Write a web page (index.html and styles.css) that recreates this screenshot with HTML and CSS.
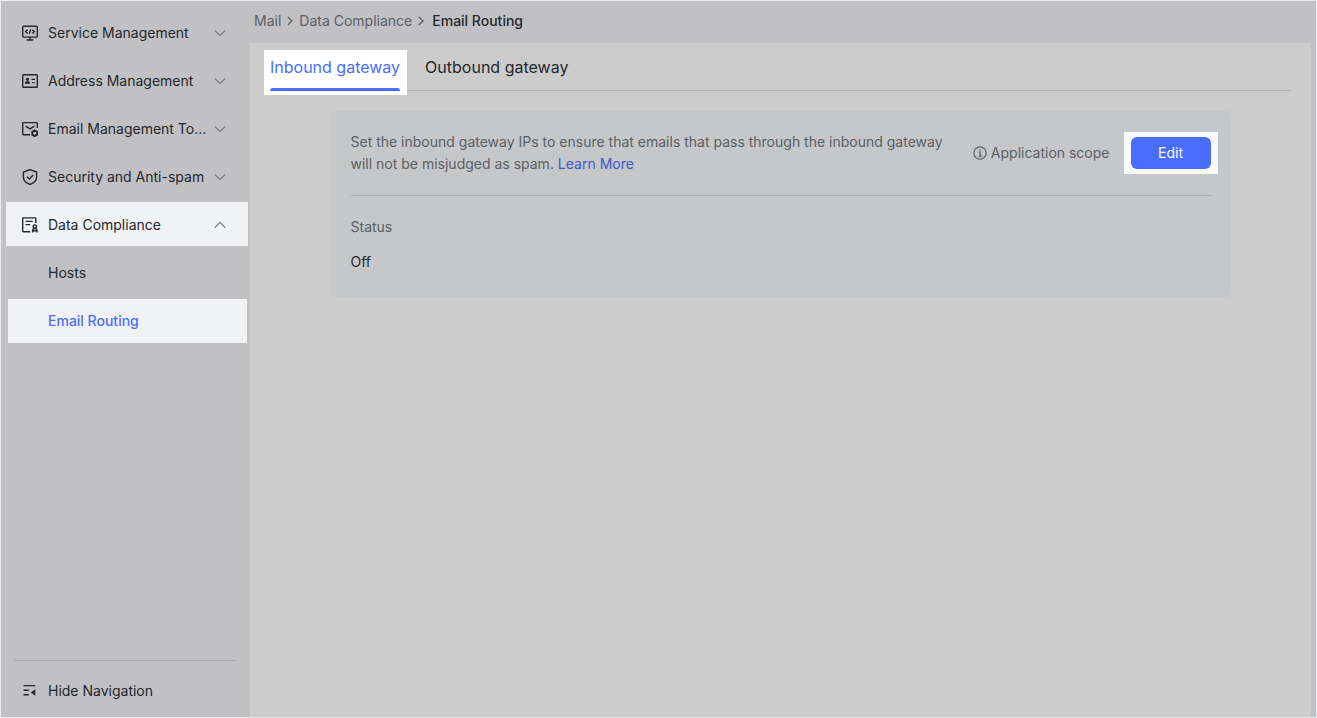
FILE: index.html
```html
<!DOCTYPE html>
<html lang="en">
<head>
<meta charset="utf-8">
<title>Email Routing</title>
<link rel="stylesheet" href="styles.css">
</head>
<body>
<div class="app">
  <aside class="sidebar">
    <nav class="nav" aria-label="Main">
      <button class="nav-item" type="button">
        <svg class="icon" viewBox="0 0 16 16"><rect x=".7" y="1.2" width="14.6" height="10.9" rx=".8"/><path d="M8 12v2.8M4.6 15h6.8M5.6 4.8 3.7 6.6l1.9 1.8M10.4 4.8l1.9 1.8-1.9 1.8M8.7 4.4 7.3 8.8"/></svg>
        <span class="label">Service Management</span>
        <svg class="chevron" viewBox="0 0 12 12"><path d="m.8 3.4 5.2 5.2 5.2-5.2"/></svg>
      </button>
      <button class="nav-item" type="button">
        <svg class="icon" viewBox="0 0 16 16"><rect x=".7" y="1.7" width="14.6" height="12.6" rx=".8"/><circle class="solid" cx="5.5" cy="6.3" r="1.6"/><path class="solid" d="M2.8 10.7c0-1.700 1.100-2.700 2.700-2.700s2.700 1 2.700 2.700z"/><path d="M9.500 6.400h3.500M10.200 9.600h2.300"/></svg>
        <span class="label">Address Management</span>
        <svg class="chevron" viewBox="0 0 12 12"><path d="m.8 3.4 5.2 5.2 5.2-5.2"/></svg>
      </button>
      <button class="nav-item" type="button">
        <svg class="icon" viewBox="0 0 16 16"><path d="M8.200 13.800H1.400a.7.7 0 0 1-.7-.7V2.300a.7.7 0 0 1 .7-.7h13.200a.7.7 0 0 1 .7.7v4.800M3.600 5.100 8 7.900l4.400-2.800"/><path class="gear" d="m12.700 9.500 2.400 1.400v2.800l-2.400 1.400-2.400-1.400v-2.800z"/></svg>
        <span class="label">Email Management To...</span>
        <svg class="chevron" viewBox="0 0 12 12"><path d="m.8 3.4 5.2 5.2 5.2-5.2"/></svg>
      </button>
      <button class="nav-item" type="button">
        <svg class="icon" viewBox="0 0 16 16"><path d="m8 .5 6.600 2.500v5.200c0 3.200-2.700 5.600-6.600 7.300-3.900-1.700-6.600-4.100-6.600-7.300V3zM5 7.700l2.300 2.200 3.900-3.900"/></svg>
        <span class="label">Security and Anti-spam</span>
        <svg class="chevron" viewBox="0 0 12 12"><path d="m.8 3.4 5.2 5.2 5.2-5.2"/></svg>
      </button>
      <button class="nav-item highlighted" type="button" aria-expanded="true">
        <svg class="icon" viewBox="0 0 16 16"><path d="M8.200 14.800H1.400a.7.7 0 0 1-.7-.7V1.600a.7.7 0 0 1 .7-.7h11.700a.7.7 0 0 1 .7.7v4.500M3.600 4.400h7.200M3.600 7.600h4.600"/><circle cx="12.800" cy="9.600" r="1.700"/><path d="M10.600 15.600v-1.900c0-1.500.8-2.300 2.200-2.300s2.200.8 2.200 2.300v1.900M10.600 13.700h4.400"/></svg>
        <span class="label">Data Compliance</span>
        <svg class="chevron" viewBox="0 0 12 12"><path d="m.8 8.600 5.200-5.200 5.200 5.200"/></svg>
      </button>
      <div class="subnav">
        <a class="subnav-item" href="#hosts">Hosts</a>
        <a class="subnav-item current" href="#email-routing" aria-current="page">Email Routing</a>
      </div>
    </nav>
    <button class="hide-nav" type="button">
      <svg class="icon" viewBox="0 0 16 16"><path d="M1.500 2.600h11.800M1.500 7.300h5.300M1.500 11.800h5.300"/><path class="solid" d="M13.300 6.200v6.600L8.700 9.500z"/></svg>
      <span>Hide Navigation</span>
    </button>
  </aside>

  <main class="main">
    <nav class="breadcrumb" aria-label="Breadcrumb">
      <a href="#mail">Mail</a>
      <svg viewBox="0 0 8 12"><path d="m1.800 2 4.200 4-4.200 4"/></svg>
      <a href="#data-compliance">Data Compliance</a>
      <svg viewBox="0 0 8 12"><path d="m1.800 2 4.200 4-4.200 4"/></svg>
      <span class="here">Email Routing</span>
    </nav>
    <div class="panel">
      <div class="tabs" role="tablist">
        <button class="tab selected" type="button" role="tab" aria-selected="true"><span class="tab-text">Inbound gateway</span></button>
        <button class="tab" type="button" role="tab" aria-selected="false"><span class="tab-text">Outbound gateway</span></button>
      </div>
      <section class="card">
        <div class="card-head">
          <p class="intro">Set the inbound gateway IPs to ensure that emails that pass through the inbound gateway will not be misjudged as spam. <a href="#learn-more">Learn More</a></p>
          <div class="actions">
            <span class="scope">
              <svg viewBox="0 0 14 14"><circle cx="7" cy="7" r="6.200"/><path d="M5.800 6.200H7.200v4M5.500 10.200h3.200"/><circle class="dot" cx="7" cy="4" r=".8"/></svg>
              Application scope
            </span>
            <div class="spotlight"><button class="edit" type="button">Edit</button></div>
          </div>
        </div>
        <dl class="status">
          <dt>Status</dt>
          <dd>Off</dd>
        </dl>
      </section>
    </div>
  </main>
</div>
</body>
</html>
```
FILE: styles.css
```css
* {
  box-sizing: border-box;
}

body {
  margin: 0;
  background: #c1c1c3;
  color: #24272c;
  font: 14px/22px Inter, "Liberation Sans", sans-serif;
}

button {
  padding: 0;
  border: 0;
  background: none;
  color: inherit;
  font: inherit;
  text-align: left;
}

a {
  color: inherit;
  text-decoration: none;
}

svg {
  flex: none;
  fill: none;
  stroke: currentColor;
}

.app {
  display: flex;
  min-height: 100vh;
  border: 1px solid #e9ebec;
}

/* Sidebar */
.sidebar {
  display: flex;
  flex: none;
  flex-direction: column;
  justify-content: space-between;
  width: 249px;
}

.nav {
  display: flex;
  flex-direction: column;
  gap: 4px;
  padding: 9px 2px 0 5px;
}

.nav-item {
  display: flex;
  align-items: center;
  height: 44px;
  padding: 2px 22px 0 16px;
}

.highlighted,
.current {
  background: #f1f2f4;
}

.icon {
  width: 16px;
  height: 16px;
  margin-right: 10px;
  stroke-width: 1.4;
}

.solid {
  fill: currentColor;
  stroke: none;
}

.gear {
  stroke-width: 2;
}

.label {
  flex: 1;
  white-space: nowrap;
}

.chevron {
  width: 12px;
  height: 12px;
  color: #76797f;
  stroke-width: 1.3;
}

.subnav {
  display: flex;
  flex-direction: column;
  gap: 4px;
  padding: 1px 1px 0 2px;
}

.subnav-item {
  padding: 11px 40px;
}

.current {
  color: #4a6dff;
  font-weight: 500;
}

.hide-nav {
  display: flex;
  align-items: center;
  margin: 0 15px 0 13px;
  padding: 19px 8px 15px;
  border-top: 1px solid #a9aaac;
}

/* Main area */
.main {
  display: flex;
  flex: 1;
  flex-direction: column;
  min-width: 0;
  padding-right: 5px;
}

.breadcrumb {
  display: flex;
  align-items: center;
  gap: 5px;
  padding: 9px 4px 11px;
  color: #5c5f65;
}

.breadcrumb svg {
  width: 8px;
  height: 12px;
  stroke-width: 1.3;
}

.here {
  margin-left: 2px;
  color: #24272c;
  font-weight: 500;
}

.panel {
  flex: 1;
  padding: 7px 20px 20px;
  background: #ccc;
}

.tabs {
  display: flex;
  gap: 12px;
  height: 41px;
  margin-left: -6px;
  border-bottom: 1px solid #b0b1b3;
}

.tab {
  height: 45px;
  padding: 5px 7px 4px 6px;
  font-size: 16px;
  line-height: 24px;
}

.tab-text {
  display: flex;
  flex-direction: column;
  justify-content: space-between;
  height: 36px;
}

.selected {
  background: #fff;
  color: #4a6dff;
}

.selected .tab-text::after {
  height: 3px;
  border-radius: 3px 3px 0 0;
  background: #4a6dff;
  content: "";
}

.card {
  max-width: 900px;
  margin: 20px auto 0;
  padding: 20px 20px 24px;
  border-radius: 4px;
  background: #c6c7c9;
}

.card-head {
  display: flex;
  align-items: center;
  justify-content: space-between;
  padding-bottom: 20px;
  border-bottom: 1px solid #afb0b3;
}

.intro {
  max-width: 604px;
  margin: 0;
  color: #5c5f65;
}

.intro a {
  color: #3d58cc;
}

.actions {
  display: flex;
  flex: none;
  align-items: center;
  gap: 14px;
  margin-right: -7px;
}

.scope {
  display: flex;
  align-items: center;
  gap: 4px;
  color: #5c5f65;
}

.scope svg {
  width: 14px;
  height: 14px;
  stroke-width: 1.2;
}

.scope .dot {
  fill: currentColor;
  stroke: none;
}

.spotlight {
  padding: 5px 7px;
  background: #f9fafc;
}

.edit {
  display: block;
  width: 80px;
  height: 32px;
  border-radius: 6px;
  background: #486dff;
  color: #fff;
  text-align: center;
}

.status {
  margin: 20px 0 0;
}

.status dt {
  color: #5c5f65;
}

.status dd {
  margin: 13px 0 0;
}
```
